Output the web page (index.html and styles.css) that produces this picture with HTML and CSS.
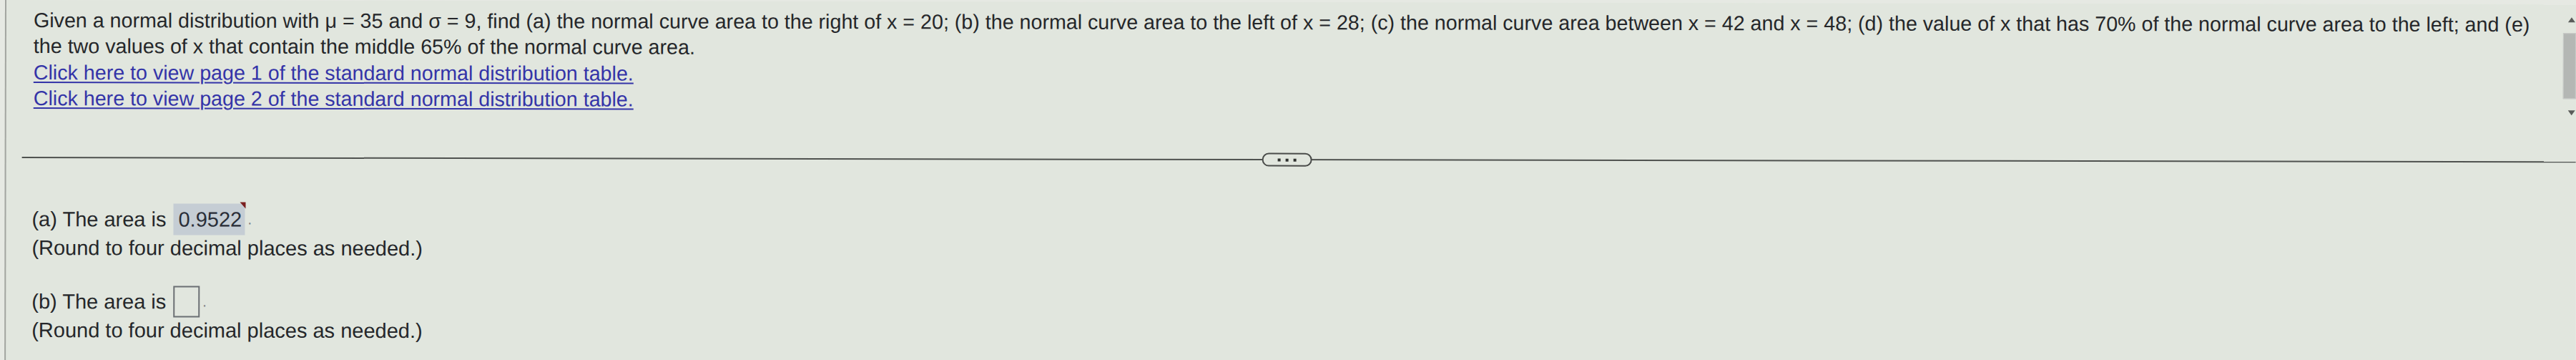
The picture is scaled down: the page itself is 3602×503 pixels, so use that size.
FILE: index.html
```html
<!DOCTYPE html>
<html lang="en">
<head>
<meta charset="utf-8">
<title>Normal distribution question</title>
<link rel="stylesheet" href="styles.css">
</head>
<body>
<div class="page">
  <section class="question-pane">
    <div class="question">
      <p class="prompt">Given a normal distribution with μ = 35 and σ = 9, find (a) the normal curve area to the right of x = 20; (b) the normal curve area to the left of x = 28; (c) the normal curve area between x = 42 and x = 48; (d) the value of x that has 70% of the normal curve area to the left; and (e) the two values of x that contain the middle 65% of the normal curve area.</p>
      <a class="link" href="#">Click here to view page 1 of the standard normal distribution table.</a>
      <a class="link" href="#">Click here to view page 2 of the standard normal distribution table.</a>
    </div>
    <div class="scrollbar">
      <span class="arrow up"></span>
      <span class="thumb"></span>
      <span class="arrow down"></span>
    </div>
  </section>

  <div class="divider">
    <span class="pill"><i></i><i></i><i></i></span>
  </div>

  <section class="answers">
    <div class="row">(a) The area is<span class="answer filled">0.9522<span class="flag"></span></span><span class="dot">.</span></div>
    <p class="note">(Round to four decimal places as needed.)</p>
    <div class="row row-b">(b) The area is<span class="answer empty"></span><span class="dot">.</span></div>
    <p class="note">(Round to four decimal places as needed.)</p>
  </section>
</div>
</body>
</html>
```

FILE: styles.css
```css
html, body {
  margin: 0;
  padding: 0;
}

body {
  background: #e6e9e3;
  font-family: "Liberation Sans", Arial, sans-serif;
  color: #25272a;
  overflow: hidden;
}

/* the photographed screen is very slightly tilted */
.page {
  margin-left: 7px;
  border-left: 2px solid #a2a5a0;
  background: #e1e6de;
  min-height: 520px;
  transform: rotate(0.1deg);
  transform-origin: 0 0;
}

/* question pane */
.question-pane {
  display: flex;
  height: 219px;
}

.question {
  flex: 1;
  padding: 10px 30px 0 38px;
  font-size: 28.65px;
  line-height: 36.4px;
}

.prompt {
  margin: 0;
}

.link {
  display: block;
  width: max-content;
  color: #3434a8;
  text-decoration: underline;
  text-decoration-thickness: 2px;
  text-underline-offset: 3px;
}

.scrollbar {
  width: 18px;
  display: flex;
  flex-direction: column;
  align-items: center;
  padding-top: 18px;
}

.arrow {
  width: 0;
  height: 0;
  margin-left: 6px;
  border-left: 5px solid transparent;
  border-right: 5px solid transparent;
}

.arrow.up {
  border-bottom: 7px solid #5a5c5a;
}

.arrow.down {
  margin-top: 16px;
  border-top: 7px solid #5a5c5a;
}

.thumb {
  margin-top: 15px;
  width: 18px;
  height: 92px;
  box-sizing: border-box;
  background: #b4b7b4;
  border: 1px solid #c9ccc9;
}

/* divider with the "more" pill */
.divider {
  position: relative;
  margin-left: 22px;
  height: 2px;
  background: #4f524f;
}

.pill {
  position: absolute;
  left: calc(50% - 52px);
  top: 50%;
  transform: translateY(-50%);
  box-sizing: border-box;
  width: 70px;
  height: 19px;
  border: 2px solid #4a4c4a;
  border-radius: 10px;
  background: #e1e6de;
  display: flex;
  align-items: center;
  justify-content: center;
  gap: 7px;
}

.pill i {
  width: 4px;
  height: 4px;
  background: #2f312f;
}

/* answers */
.answers {
  padding: 63px 0 0 36px;
  font-size: 29px;
}

.row {
  display: flex;
  align-items: center;
  height: 44px;
  line-height: 44px;
}

.answer {
  position: relative;
  box-sizing: border-box;
  height: 44px;
  margin-left: 10px;
}

.answer.filled {
  width: 100px;
  padding-left: 7px;
  background: #c5cdd4;
  color: #2a2e38;
}

.answer.empty {
  width: 37px;
  border: 2px solid #6b6f73;
}

.flag {
  position: absolute;
  top: -2px;
  right: -1px;
  width: 0;
  height: 0;
  border-top: 9px solid #7b1f1f;
  border-left: 8px solid transparent;
}

.dot {
  margin-left: 4px;
  color: #7a7d80;
  font-size: 20px;
}

.note {
  margin: 0;
  line-height: 36px;
}

.row-b {
  margin-top: 35px;
}
```
